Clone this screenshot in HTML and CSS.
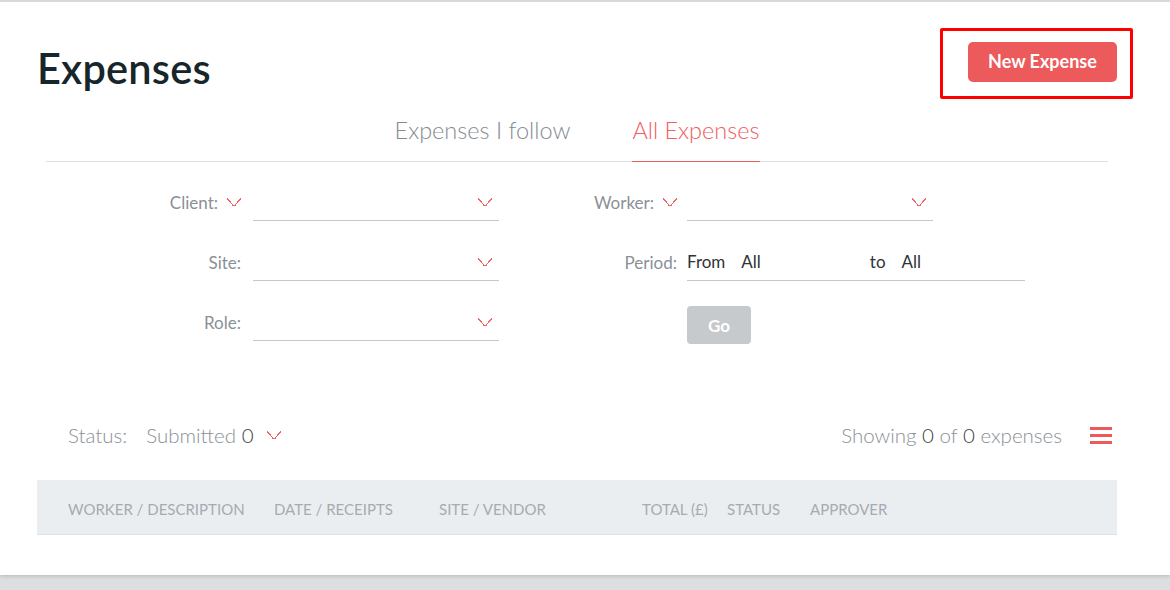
FILE: index.html
```html
<!DOCTYPE html>
<html lang="en">
<head>
<meta charset="utf-8">
<title>Expenses</title>
<link rel="stylesheet" href="styles.css">
</head>
<body>
<div class="page">
  <div class="content">
    <header class="header">
      <h1 class="title">Expenses</h1>
      <div class="highlight">
        <button class="btn-primary">New Expense</button>
      </div>
    </header>

    <nav class="tabs">
      <a class="tab">Expenses I follow</a>
      <a class="tab active">All Expenses</a>
    </nav>

    <section class="filters">
      <div class="label">Client: <span class="chev"></span></div>
      <div class="field select"><span class="chev"></span></div>
      <div class="label label-r">Worker: <span class="chev"></span></div>
      <div class="field select short"><span class="chev"></span></div>

      <div class="label">Site:</div>
      <div class="field select"><span class="chev"></span></div>
      <div class="label label-r">Period:</div>
      <div class="field period">
        <span class="from">From</span><span class="val">All</span>
        <span class="to">to</span><span class="val">All</span>
      </div>

      <div class="label">Role:</div>
      <div class="field select"><span class="chev"></span></div>
      <div class="label label-r"></div>
      <div class="go-cell"><button class="btn-go">Go</button></div>
    </section>

    <section class="statusbar">
      <div class="status">
        <span class="status-label">Status:</span>
        <span class="status-value">Submitted <span class="num">0</span></span>
        <span class="chev"></span>
      </div>
      <div class="showing">
        <span>Showing <span class="num">0</span> of <span class="num">0</span> expenses</span>
        <span class="burger"><i></i><i></i><i></i></span>
      </div>
    </section>

    <div class="thead">
      <span class="c1">WORKER / DESCRIPTION</span>
      <span class="c2">DATE / RECEIPTS</span>
      <span class="c3">SITE / VENDOR</span>
      <span class="c4">TOTAL (£)</span>
      <span class="c5">STATUS</span>
      <span class="c6">APPROVER</span>
    </div>
  </div>
</div>
</body>
</html>
```

FILE: styles.css
```css
* { box-sizing: border-box; }
html, body { margin: 0; padding: 0; }
body {
  background: #dcdedf;
  font-family: Lato, "Noto Sans", sans-serif;
  color: #8a9096;
  height: 590px;
  overflow: hidden;
}
.page {
  background: #fff;
  border-top: 2px solid #d6dada;
  height: 575px;
  box-shadow: 0 1px 4px rgba(0,0,0,0.18);
}
.content {
  width: 1080px;
  margin-left: 37px;
}
.header {
  display: flex;
  justify-content: space-between;
  align-items: flex-start;
  height: 107px;
}
.title {
  margin: 42px 0 0 0;
  font-size: 41.5px;
  font-weight: 600;
  color: #16262a;
  line-height: 48px;
  letter-spacing: 0.2px;
}
.highlight {
  margin-top: 26px;
  margin-right: -16px;
  border: 3px solid #ff0000;
  border-radius: 2px;
  padding: 11px 13px 14px 25px;
}
.btn-primary {
  display: block;
  width: 149px;
  height: 40px;
  border: 0;
  border-radius: 5px;
  background: #ec5a5c;
  color: #fff;
  font-family: inherit;
  font-size: 18px;
  font-weight: 700;
  padding: 0 0 2px;
}
.tabs {
  display: flex;
  justify-content: center;
  gap: 62px;
  margin: 0 9px;
  border-bottom: 1px solid #dddfe0;
}
.tab {
  position: relative;
  font-size: 23.5px;
  font-weight: 300;
  color: #858b91;
  padding-bottom: 10px;
  line-height: 42px;
  margin-bottom: -1px;
  border-bottom: 1px solid transparent;
}
.tab.active {
  color: #ef5d5f;
  border-bottom-color: #ef5d5f;
}
.filters {
  display: grid;
  grid-template-columns: 216px 246px 188px 338px;
  grid-auto-rows: 37px;
  row-gap: 23px;
  margin-top: 22px;
  font-size: 17px;
}
.label {
  display: flex;
  align-items: center;
  justify-content: flex-end;
  padding-right: 12px;
  height: 36px;
  gap: 9px;
}
.label-r { padding-right: 10px; }
.field {
  border-bottom: 1px solid #c6c9cc;
  display: flex;
  align-items: center;
  height: 37px;
  padding-bottom: 1px;
}
.select { justify-content: flex-end; padding-right: 7px; }
.short { width: 246px; }
.chev {
  display: inline-block;
  width: 14px;
  height: 8px;
  background:
    linear-gradient(to top right, transparent calc(50% - 0.8px), #f06466 calc(50% - 0.8px), #f06466 calc(50% + 0.4px), transparent calc(50% + 0.4px)) left / 50% 100% no-repeat,
    linear-gradient(to top left, transparent calc(50% - 0.8px), #f06466 calc(50% - 0.8px), #f06466 calc(50% + 0.4px), transparent calc(50% + 0.4px)) right / 50% 100% no-repeat;
}
.period { color: #2e3336; }
.period .val { margin-left: 16px; }
.period .to { margin-left: 109px; }
.go-cell { padding-top: 2px; }
.btn-go {
  width: 64px;
  height: 38px;
  border: 0;
  border-radius: 4px;
  background: #c7cacc;
  color: #fff;
  font-family: inherit;
  font-size: 17px;
  font-weight: 700;
}
.statusbar {
  display: flex;
  justify-content: space-between;
  align-items: center;
  margin-top: 79px;
  height: 30px;
  font-size: 20.5px;
  font-weight: 300;
}
.status { display: flex; align-items: center; margin-left: 31px; }
.status-label { margin-right: 19px; }
.status-value { margin-right: 13px; }
.num { color: #3a3f42; }
.showing { display: flex; align-items: center; margin-right: 5px; }
.burger {
  display: flex;
  flex-direction: column;
  gap: 4px;
  margin-left: 28px;
  width: 22px;
}
.burger i {
  display: block;
  height: 3px;
  background: #ec5a5c;
}
.thead {
  margin-top: 30px;
  height: 55px;
  background: #ebeef1;
  border-bottom: 1px solid #dde1e5;
  display: flex;
  align-items: center;
  font-size: 15px;
  color: #a6abb0;
  padding-top: 3px;
}
.thead span { flex: none; }
.c1 { margin-left: 31px; width: 206px; }
.c2 { width: 165px; }
.c3 { width: 203px; }
.c4 { width: 85px; }
.c5 { width: 83px; }
```
